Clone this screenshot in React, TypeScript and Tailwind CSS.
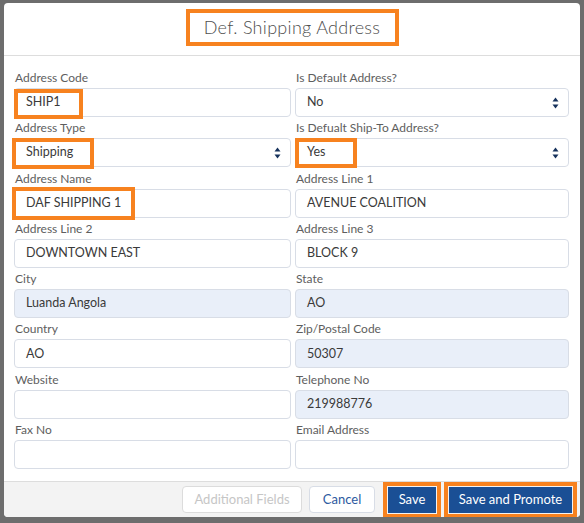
import React from "react"

type Field = {
  label: string
  value?: string
  select?: boolean
  locked?: boolean
  mark?: string
}

// grid cells, left column first, then right column, row by row
const fields: Field[] = [
  { label: "Address Code", value: "SHIP1", mark: "left-[-1px] top-0 w-[69px] h-[30px]" },
  { label: "Is Default Address?", value: "No", select: true },
  { label: "Address Type", value: "Shipping", select: true, mark: "left-[-3px] top-[-1px] w-[82px] h-[31px]" },
  { label: "Is Defualt Ship-To Address?", value: "Yes", select: true, mark: "left-[-1px] top-[-1px] w-[62px] h-[30px]" },
  { label: "Address Name", value: "DAF SHIPPING 1", mark: "left-[-3px] top-[-3px] w-[123px] h-[33px]" },
  { label: "Address Line 1", value: "AVENUE COALITION" },
  { label: "Address Line 2", value: "DOWNTOWN EAST" },
  { label: "Address Line 3", value: "BLOCK 9" },
  { label: "City", value: "Luanda Angola", locked: true },
  { label: "State", value: "AO", locked: true },
  { label: "Country", value: "AO" },
  { label: "Zip/Postal Code", value: "50307", locked: true },
  { label: "Website" },
  { label: "Telephone No", value: "219988776", locked: true },
  { label: "Fax No" },
  { label: "Email Address" },
]

const Arrows = () => (
  <svg width="7" height="12" viewBox="0 0 7 12" className="absolute right-[9px] top-[8px]">
    <path d="M3.5 0.5 L6.5 4.5 L0.5 4.5 Z" fill="#16325c" />
    <path d="M3.5 11.5 L6.5 7.5 L0.5 7.5 Z" fill="#16325c" />
  </svg>
)

const FormField = ({ field }: { field: Field }) => {
  return (
    <div className="flex flex-col">
      <label className="text-[12px] leading-[16px] text-[#5e5e5e] mb-[2px] pl-[1px]">
        {field.label}
      </label>
      <div
        className={
          "relative h-[29px] rounded-[4px] border border-[#d8dde6] flex items-center pl-[11px] text-[12.5px] text-[#3a3a3a] " +
          (field.locked ? "bg-[#e9eff9]" : "bg-white")
        }
      >
        {field.mark && (
          <div className={"absolute border-4 border-[#f7821f] " + field.mark} />
        )}
        <span className="relative">{field.value}</span>
        {field.select && <Arrows />}
      </div>
    </div>
  )
}

const App = () => {
  return (
    <div
      className="w-[584px] h-[523px] bg-[#6d6d6d] pt-[3px] pl-[4px] overflow-hidden"
      style={{ fontFamily: "Lato, 'Open Sans', sans-serif" }}
    >
      <div className="w-[576px] h-[514px] bg-white rounded-[4px] flex flex-col overflow-hidden">
        <div className="h-[53px] shrink-0 border-b border-[#dddddd] flex justify-center pt-[6px]">
          <div className="w-[213px] h-[37px] border-4 border-[#f7821f] flex items-center justify-center text-[18px] font-light text-[#4e4e4e] tracking-[0.3px]">
            Def. Shipping Address
          </div>
        </div>

        <div className="flex-1 pl-[10px] pt-[14px] grid grid-cols-[277px_274px] gap-x-[4px] gap-y-[3.3px] content-start">
          {fields.map((f) => (
            <FormField key={f.label} field={f} />
          ))}
        </div>

        <div className="h-[36px] shrink-0 border-t border-[#dddddd] bg-[#f3f3f3] flex items-center justify-end pr-[8px] text-[13px]">
          <button className="h-[27px] w-[120px] rounded-[4px] border border-[#dcdcdc] bg-white text-[#c6c6c6]">
            Additional Fields
          </button>
          <button className="ml-[7px] h-[27px] w-[66px] rounded-[4px] border border-[#d8dde6] bg-white text-[#2c5aa0]">
            Cancel
          </button>
          <button className="ml-[13px] h-[26px] w-[48px] bg-[#1a4f95] text-white outline-4 outline-[#f7821f] outline-offset-[1px]">
            Save
          </button>
          <button className="ml-[13px] h-[26px] w-[123px] bg-[#1a4f95] text-white outline-4 outline-[#f7821f] outline-offset-[1px]">
            Save and Promote
          </button>
        </div>
      </div>
    </div>
  )
}

export default App
